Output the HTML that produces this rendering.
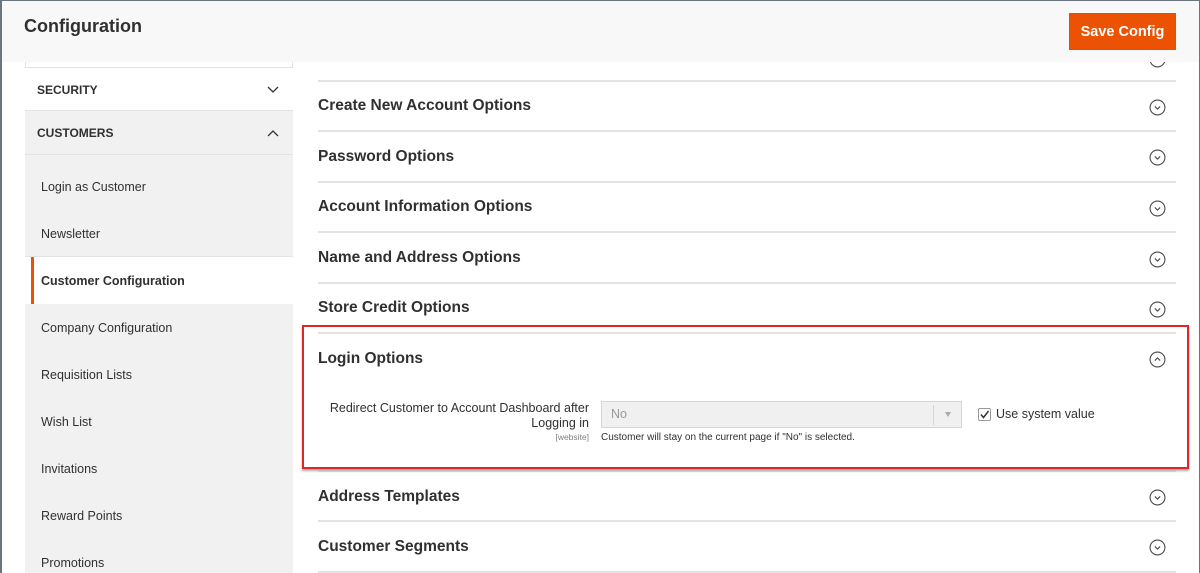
<!DOCTYPE html>
<html style="overflow:hidden;height:573px"><head><meta charset="utf-8"><style>
*{margin:0;padding:0;box-sizing:border-box}
body{width:1200px;height:573px;overflow:hidden;background:#fff;font-family:"Liberation Sans",sans-serif;color:#303030;position:relative}
.frame{position:absolute;left:0;top:0;width:1200px;height:573px;border:1px solid #6b7580;border-left-width:2px;border-bottom:none;pointer-events:none;z-index:10}
.hdr{position:absolute;left:0;top:0;width:1200px;height:62px;background:#f8f8f8;z-index:5}
.hdr h1{position:absolute;left:24px;top:16px;font-size:18px;font-weight:bold;color:#303030}
.btn{position:absolute;left:1069px;top:13px;width:107px;height:37px;background:#eb5202;color:#fff;font-weight:bold;font-size:14.5px;text-align:center;line-height:37px;border:1px solid #e15303}
.side{position:absolute;left:25px;top:55px;width:268px;height:518px;overflow:hidden}
.row{position:absolute;left:0;width:268px;border-bottom:1px solid #e3e3e3}
.sec{font-weight:bold;font-size:12px;padding-left:12px}
.item{position:absolute;left:41px;font-size:12.5px;color:#303030}
.sep{position:absolute;left:318px;width:858px;height:2px;background:#e3e3e3}
.t{position:absolute;left:318px;font-size:15.5px;font-weight:bold;color:#303030}
.ic{position:absolute;left:1149px;width:17px;height:17px}
</style></head><body>
<div class="hdr"><h1>Configuration</h1><div class="btn">Save Config</div></div>
<div class="side">
<div class="row" style="top:0;height:13px;background:#fff;border-left:1px solid #e3e3e3;border-right:1px solid #e3e3e3"></div>
<div class="row sec" style="top:13px;height:43px;background:#fff;line-height:44px">SECURITY
<svg style="position:absolute;left:242px;top:18px" width="12" height="8"><path d="M1 1l5 5 5-5" fill="none" stroke="#333" stroke-width="1.3"/></svg></div>
<div class="row sec" style="top:56px;height:44px;background:#f1f1f1;line-height:45px">CUSTOMERS
<svg style="position:absolute;left:242px;top:18px" width="12" height="8"><path d="M1 7l5-5 5 5" fill="none" stroke="#333" stroke-width="1.3"/></svg></div>
<div class="row" style="top:100px;height:102px;background:#f1f1f1"></div>
<div class="row" style="top:202px;height:47px;background:#fff;border-bottom:none"><div style="position:absolute;left:6px;top:0;width:3px;height:47px;background:#eb5202"></div></div>
<div class="row" style="top:249px;height:280px;background:#f1f1f1;border:none"></div>
</div>
<div class="item" style="top:180px">Login as Customer</div>
<div class="item" style="top:227px">Newsletter</div>
<div class="item" style="top:274px;font-weight:bold">Customer Configuration</div>
<div class="item" style="top:321px">Company Configuration</div>
<div class="item" style="top:368px">Requisition Lists</div>
<div class="item" style="top:415px">Wish List</div>
<div class="item" style="top:462px">Invitations</div>
<div class="item" style="top:509px">Reward Points</div>
<div class="item" style="top:556px">Promotions</div>

<svg class="ic" style="top:51px" viewBox="0 0 16 16"><circle cx="8" cy="8" r="7" fill="none" stroke="#444" stroke-width="1"/></svg>
<div class="sep" style="top:80px"></div>
<div class="t" style="top:97px">Create New Account Options</div>
<div class="sep" style="top:130px"></div>
<div class="t" style="top:148px">Password Options</div>
<div class="sep" style="top:181px"></div>
<div class="t" style="top:198px">Account Information Options</div>
<div class="sep" style="top:231px"></div>
<div class="t" style="top:249px">Name and Address Options</div>
<div class="sep" style="top:282px"></div>
<div class="t" style="top:299px">Store Credit Options</div>
<div class="sep" style="top:332px"></div>
<div class="t" style="top:350px">Login Options</div>
<div class="sep" style="top:470px"></div>
<div class="t" style="top:488px">Address Templates</div>
<div class="sep" style="top:520px"></div>
<div class="t" style="top:538px">Customer Segments</div>

<div style="position:absolute;left:302px;top:325px;width:887px;height:144px;border:2px solid #e22626;box-shadow:0 2px 2px #aaa"></div>

<div style="position:absolute;left:300px;top:401px;width:289px;text-align:right;font-size:12.5px;line-height:15px">Redirect Customer to Account Dashboard after<br>Logging in</div>
<div style="position:absolute;left:300px;top:432px;width:289px;text-align:right;font-size:8.5px;color:#808080">[website]</div>
<div style="position:absolute;left:601px;top:401px;width:361px;height:27px;background:#f0f0f0;border:1px solid #d6d6d6;font-size:12.5px;color:#999;line-height:25px;padding-left:9px">No
<div style="position:absolute;right:0;top:3px;width:28px;height:20px;border-left:1px solid #d6d6d6"><div style="position:absolute;left:11px;top:7px;border:3px solid transparent;border-top:5px solid #aaa"></div></div></div>
<div style="position:absolute;left:601px;top:432px;font-size:10px;color:#303030">Customer will stay on the current page if "No" is selected.</div>
<div style="position:absolute;left:978px;top:408px;width:13px;height:13px;border:1px solid #999;border-radius:2px;background:#fff"><svg width="11" height="11" style="position:absolute;left:0;top:0"><path d="M2 5.5l2.5 3L9.5 2" fill="none" stroke="#333" stroke-width="1.5"/></svg></div>
<div style="position:absolute;left:996px;top:407px;font-size:12.5px">Use system value</div>

<svg class="ic" style="top:99px" viewBox="0 0 16 16"><circle cx="8" cy="8" r="7" fill="none" stroke="#444"/><path d="M5.5 7l2.5 2.5 2.5-2.5" fill="none" stroke="#444"/></svg>
<svg class="ic" style="top:149px" viewBox="0 0 16 16"><circle cx="8" cy="8" r="7" fill="none" stroke="#444"/><path d="M5.5 7l2.5 2.5 2.5-2.5" fill="none" stroke="#444"/></svg>
<svg class="ic" style="top:200px" viewBox="0 0 16 16"><circle cx="8" cy="8" r="7" fill="none" stroke="#444"/><path d="M5.5 7l2.5 2.5 2.5-2.5" fill="none" stroke="#444"/></svg>
<svg class="ic" style="top:251px" viewBox="0 0 16 16"><circle cx="8" cy="8" r="7" fill="none" stroke="#444"/><path d="M5.5 7l2.5 2.5 2.5-2.5" fill="none" stroke="#444"/></svg>
<svg class="ic" style="top:301px" viewBox="0 0 16 16"><circle cx="8" cy="8" r="7" fill="none" stroke="#444"/><path d="M5.5 7l2.5 2.5 2.5-2.5" fill="none" stroke="#444"/></svg>
<svg class="ic" style="top:351px" viewBox="0 0 16 16"><circle cx="8" cy="8" r="7" fill="none" stroke="#444"/><path d="M5.5 9l2.5-2.5 2.5 2.5" fill="none" stroke="#444"/></svg>
<svg class="ic" style="top:489px" viewBox="0 0 16 16"><circle cx="8" cy="8" r="7" fill="none" stroke="#444"/><path d="M5.5 7l2.5 2.5 2.5-2.5" fill="none" stroke="#444"/></svg>
<svg class="ic" style="top:539px" viewBox="0 0 16 16"><circle cx="8" cy="8" r="7" fill="none" stroke="#444"/><path d="M5.5 7l2.5 2.5 2.5-2.5" fill="none" stroke="#444"/></svg>
<div class="sep" style="top:571px"></div>
<div class="frame"></div>
</body></html>
